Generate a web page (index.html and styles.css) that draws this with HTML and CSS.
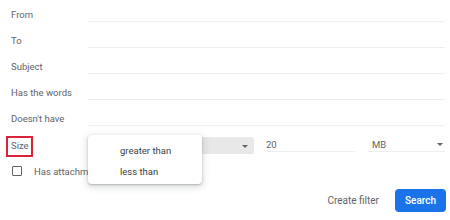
FILE: index.html
```html
<!DOCTYPE html>
<html>
<head>
<meta charset="utf-8">
<link rel="stylesheet" href="styles.css">
</head>
<body>
<div class="form">
  <div class="row"><span class="label">From</span><span class="field"></span></div>
  <div class="row"><span class="label">To</span><span class="field"></span></div>
  <div class="row"><span class="label">Subject</span><span class="field"></span></div>
  <div class="row"><span class="label">Has the words</span><span class="field"></span></div>
  <div class="row"><span class="label">Doesn't have</span><span class="field"></span></div>
  <div class="row">
    <span class="label"><span class="hl">Size</span></span>
    <div class="size">
      <span class="select grey"><span class="arrow"></span></span>
      <span class="field num">20</span>
      <span class="field unit">MB<span class="arrow"></span></span>
    </div>
  </div>
  <div class="row attach">
    <span class="check"></span><span class="attach-label">Has attachments</span>
  </div>
  <div class="footer">
    <span class="create">Create filter</span>
    <span class="search">Search</span>
  </div>
  <div class="menu">
    <div class="opt">greater than</div>
    <div class="opt">less than</div>
  </div>
</div>
</body>
</html>
```
FILE: styles.css
```css
html, body { margin: 0; padding: 0; background: #fff; }
body {
  font-family: Roboto, "Noto Sans", Arial, sans-serif;
  font-size: 9.5px;
  color: #5f6368;
  width: 450px;
  height: 220px;
  overflow: hidden;
}
.form {
  position: relative;
  padding: 2px 5px 0 11px;
}
.row {
  display: grid;
  grid-template-columns: 77px 1fr;
  align-items: center;
  height: 26px;
}
.label { line-height: 14px; }
.field {
  display: block;
  height: 12px;
  border-bottom: 1px solid #eceef0;
  line-height: 12px;
}
.hl {
  display: inline-block;
  margin: 3px 0 0 -5px;
  padding: 1px 2px 3px 3px;
  border: 2px solid #d9233a;
  line-height: 13px;
}
.size {
  display: flex;
  align-items: center;
}
.select {
  position: relative;
  width: 166px;
  height: 17px;
  margin-top: 1px;
}
.grey { background: #e8e8e8; border-radius: 2px; }
.arrow {
  position: absolute;
  right: 6px;
  top: 50%;
  margin-top: -1px;
  width: 0;
  height: 0;
  border-left: 3px solid transparent;
  border-right: 3px solid transparent;
  border-top: 3px solid #5f6368;
}
.num {
  width: 89px;
  margin-left: 11px;
  padding-left: 1px;
  margin-top: 1px;
}
.unit {
  position: relative;
  width: 73px;
  margin-left: 13px;
  padding-left: 4px;
  margin-top: 1px;
}
.unit .arrow { right: 2px; margin-top: -2px; }
.attach {
  display: flex;
  align-items: center;
}
.check {
  width: 8px;
  height: 8px;
  border: 1.5px solid #5f6368;
  border-radius: 1px;
  margin-left: 1px;
}
.attach-label {
  margin-left: 12px;
}
.footer {
  display: flex;
  justify-content: flex-end;
  align-items: center;
  margin-top: 4px;
  height: 24px;
}
.create { margin-right: 16px; font-size: 10px; }
.search {
  background: #1a73e8;
  color: #fff;
  font-size: 10px;
  font-weight: 500;
  height: 23px;
  line-height: 23px;
  padding: 0 10px;
  border-radius: 4px;
  margin-right: -1px;
}
.menu {
  position: absolute;
  left: 88px;
  top: 135px;
  width: 114px;
  height: 49px;
  background: #fff;
  border-radius: 4px;
  box-shadow: 0 1px 2px rgba(60,64,67,.3), 0 2px 6px 2px rgba(60,64,67,.15);
  padding-top: 5px;
  box-sizing: border-box;
}
.opt {
  padding-left: 32px;
  height: 21px;
  line-height: 21px;
  color: #3c4043;
}
```
